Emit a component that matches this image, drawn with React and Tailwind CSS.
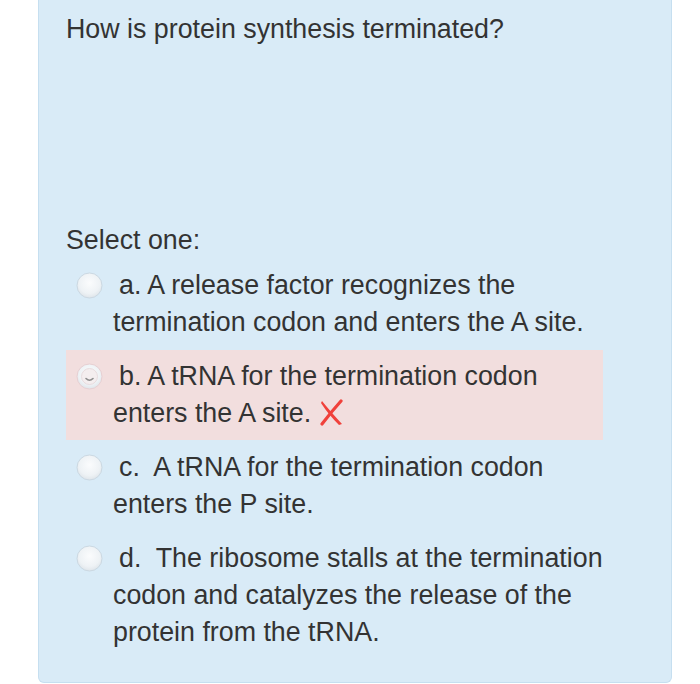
import React from "react";

function Radio({ checked, id }) {
  return (
    <svg
      width="27"
      height="27"
      viewBox="0 0 27 27"
      className="inline-block align-middle -ml-[37px] mr-[16px] relative -top-[1px]"
    >
      <defs>
        <radialGradient id={id} cx="50%" cy="40%" r="60%">
          <stop offset="0%" stopColor="#fbfcfd" />
          <stop offset="70%" stopColor="#eef2f5" />
          <stop offset="100%" stopColor="#dfe5ea" />
        </radialGradient>
      </defs>
      <circle cx="13.5" cy="13.5" r="12.5" fill={`url(#${id})`} stroke={checked ? "#e7cfd2" : "#cbd8e2"} strokeWidth="1" />
      {checked && (
        <>
          <circle cx="13.5" cy="13.5" r="8" fill="#f4eeef" stroke="#e4d6d8" strokeWidth="0.8" />
          <path d="M10 15.5 Q13.5 19 17 15.5" fill="none" stroke="#8f8f8f" strokeWidth="1.6" strokeLinecap="round" />
        </>
      )}
    </svg>
  );
}

function RedX() {
  return (
    <svg width="26" height="27" viewBox="0 0 26 27" className="inline-block align-middle ml-[8px] relative -top-[2px]">
      <path d="M3 2 Q11 12 23 25 L20 26 Q9 15 2 4 Z" fill="#f0413b" />
      <path d="M22 2 Q13 12 3 25" fill="none" stroke="#f0413b" strokeWidth="3.2" strokeLinecap="round" />
    </svg>
  );
}

function Option({ text, checked, wrong, id, extra }) {
  return (
    <div className={`pl-[47px] pt-[8px] pb-[8px] mb-[1px] whitespace-pre-wrap ${wrong ? "bg-[#f2dede]" : ""}`}>
      <Radio checked={checked} id={id} />
      {text}
      {extra}
    </div>
  );
}

export default function App() {
  return (
    <div className="w-[700px] h-[684px] bg-white overflow-hidden" style={{ fontFamily: '"Liberation Sans", Arial, sans-serif' }}>
      <div className="ml-[38px] w-[634px] bg-[#d9ebf7] border border-t-0 border-[#c6dff0] rounded-b-[6px] pl-[27px] pr-[68px] pb-[22px] text-[26.8px] leading-[37px] text-[#333333]">
        <div className="pt-[11px]">How is protein synthesis terminated?</div>
        <div className="mt-[174px]">Select one:</div>
        <Option id="ra" text="a. A release factor recognizes the termination codon and enters the A site." />
        <Option id="rb" checked wrong text="b. A tRNA for the termination codon enters the A site." extra={<RedX />} />
        <Option id="rc" text="c.  A tRNA for the termination codon enters the P site." />
        <Option id="rd" text="d.  The ribosome stalls at the termination codon and catalyzes the release of the protein from the tRNA." />
      </div>
    </div>
  );
}
